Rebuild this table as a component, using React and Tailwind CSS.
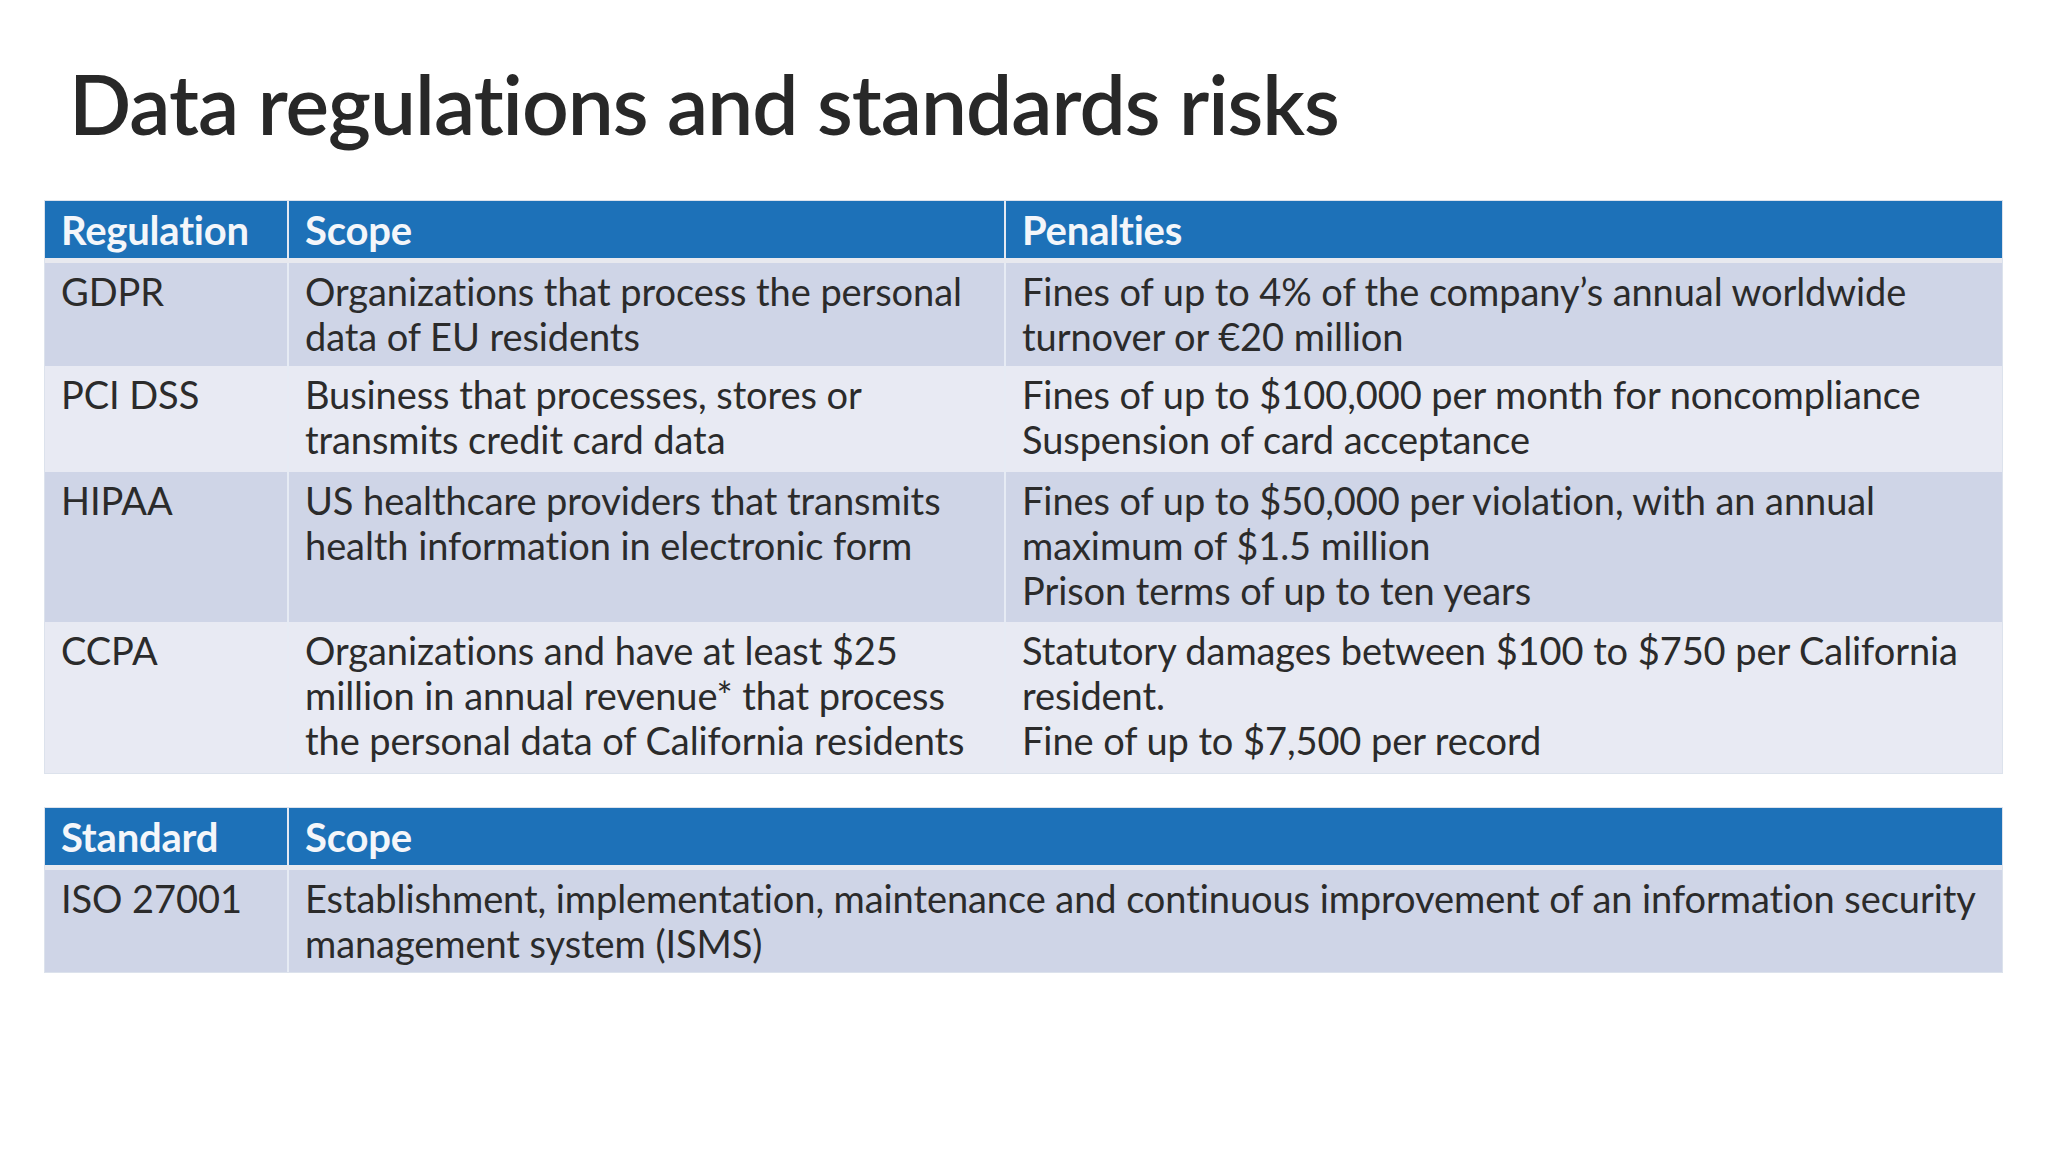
import React from 'react';

const regulations = [
  {
    name: 'GDPR',
    scope: ['Organizations that process the personal', 'data of EU residents'],
    penalties: ['Fines of up to 4% of the company’s annual worldwide', 'turnover or €20 million'],
    height: 'h-[103px]',
    shade: 'bg-[#cfd5e7]'
  },
  {
    name: 'PCI DSS',
    scope: ['Business that processes, stores or', 'transmits credit card data'],
    penalties: ['Fines of up to $100,000 per month for noncompliance', 'Suspension of card acceptance'],
    height: 'h-[106px]',
    shade: 'bg-[#e8eaf3]'
  },
  {
    name: 'HIPAA',
    scope: ['US healthcare providers that transmits', 'health information in electronic form'],
    penalties: [
      'Fines of up to $50,000 per violation, with an annual',
      'maximum of $1.5 million',
      'Prison terms of up to ten years'
    ],
    height: 'h-[150px]',
    shade: 'bg-[#cfd5e7]'
  },
  {
    name: 'CCPA',
    scope: [
      'Organizations and have at least $25',
      'million in annual revenue* that process',
      'the personal data of California residents'
    ],
    penalties: [
      'Statutory damages between $100 to $750 per California',
      'resident.',
      'Fine of up to $7,500 per record'
    ],
    height: 'h-[151px]',
    shade: 'bg-[#e8eaf3]'
  }
];

function Lines({ lines }) {
  return lines.map((line) => (
    <div key={line} className="whitespace-nowrap">
      {line}
    </div>
  ));
}

function HeaderCell({ children, className = '' }) {
  return (
    <div className={`pl-[16px] pt-[7px] text-[40px] leading-[45px] font-bold tracking-[-0.005em] text-[#f4f6fa] ${className}`}>
      {children}
    </div>
  );
}

function App() {
  return (
    <div
      className="w-[2048px] h-[1152px] bg-white text-[#2b2b2b] overflow-hidden [font-variant-ligatures:none]"
      style={{ fontFamily: 'Lato, "Open Sans", sans-serif' }}
    >
      <h1 className="pl-[69px] pt-[62px] text-[82px] leading-[82px] font-semibold tracking-[-0.012em] text-[#282828]">
        Data regulations and standards risks
      </h1>

      <div className="mt-[56px] ml-[44px] w-[1959px] border border-[#dce2ec]">
        <div className="flex h-[62px] bg-[#1d71b8] border-b-[5px] border-[#e8e9ef]">
          <HeaderCell className="w-[244px] border-r-2 border-[#e4e9f2]">Regulation</HeaderCell>
          <HeaderCell className="w-[717px] border-r-2 border-[#e4e9f2]">Scope</HeaderCell>
          <HeaderCell className="flex-1">Penalties</HeaderCell>
        </div>
        {regulations.map((row) => (
          <div
            key={row.name}
            className={`flex ${row.height} ${row.shade} text-[38px] leading-[45px] tracking-[-0.002em]`}
          >
            <div className="w-[244px] pl-[16px] pt-[6px] border-r-2 border-[#e6ebf4]">{row.name}</div>
            <div className="w-[717px] pl-[16px] pt-[6px] border-r-2 border-[#e6ebf4]">
              <Lines lines={row.scope} />
            </div>
            <div className="flex-1 pl-[16px] pt-[6px]">
              <Lines lines={row.penalties} />
            </div>
          </div>
        ))}
      </div>

      <div className="mt-[33px] ml-[44px] w-[1959px] border border-[#dce2ec]">
        <div className="flex h-[62px] bg-[#1d71b8] border-b-[5px] border-[#e8e9ef]">
          <HeaderCell className="w-[244px] border-r-2 border-[#e4e9f2]">Standard</HeaderCell>
          <HeaderCell className="flex-1">Scope</HeaderCell>
        </div>
        <div className="flex h-[102px] bg-[#cfd5e7] text-[38px] leading-[45px] tracking-[-0.002em]">
          <div className="w-[244px] pl-[16px] pt-[6px] border-r-2 border-[#e6ebf4]">ISO 27001</div>
          <div className="flex-1 pl-[16px] pt-[6px]">
            <Lines
              lines={[
                'Establishment, implementation, maintenance and continuous improvement of an information security',
                'management system (ISMS)'
              ]}
            />
          </div>
        </div>
      </div>
    </div>
  );
}

export default App;
